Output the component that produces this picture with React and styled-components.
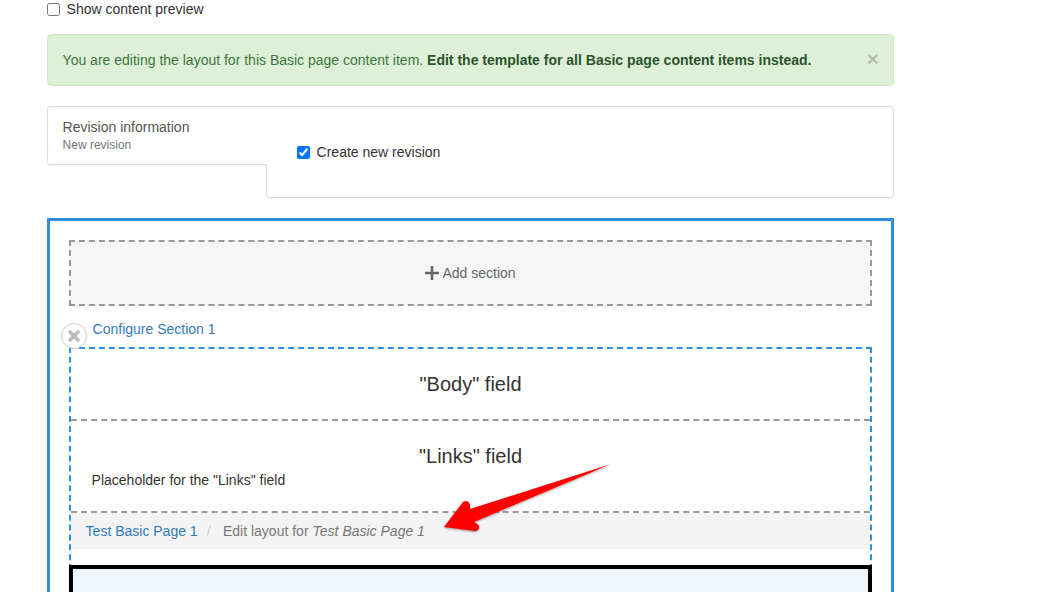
import React from "react";
import styled, { createGlobalStyle } from "styled-components";

const GlobalStyle = createGlobalStyle`
  html, body {
    margin: 0;
    height: 592px;
    overflow: hidden;
    background: #fff;
  }
  body {
    font-family: "Liberation Sans", Arial, sans-serif;
    font-size: 14px;
    line-height: 20px;
    color: #333;
  }
`;

const Page = styled.div`
  width: 847px;
  margin-left: 47px;
  position: relative;
`;

const CheckRow = styled.label`
  display: flex;
  align-items: center;
  gap: 6.6px;
  color: #333;
  input {
    width: 13px;
    height: 13px;
    margin: 0;
  }
`;

const PreviewRow = styled(CheckRow)`
  height: 18px;
`;

const Message = styled.div`
  margin-top: 16px;
  height: 52px;
  box-sizing: border-box;
  padding: 15px 15px 15px 14.6px;
  display: flex;
  justify-content: space-between;
  background: #dff0d8;
  border: 1px solid #d6e9c6;
  border-radius: 4px;
  color: #3c763d;
  b {
    color: #2b542c;
  }
`;

const Close = styled.span`
  font-size: 21px;
  font-weight: 700;
  line-height: 18px;
  color: #000;
  opacity: 0.2;
  margin-right: -1px;
  text-shadow: 0 1px 0 #fff;
`;

const Revision = styled.div`
  margin-top: 20px;
  display: flex;
  align-items: flex-start;
`;

const RevisionTab = styled.div`
  position: relative;
  z-index: 1;
  width: 220px;
  height: 59px;
  box-sizing: border-box;
  margin-right: -1px;
  padding: 11px 14.6px;
  background: #fff;
  border: 1px solid #ddd;
  border-right: 0;
  border-radius: 4px 0 0 4px;
  box-shadow: 0 1px 1px rgba(0, 0, 0, 0.05);
`;

const TabTitle = styled.div`
  color: #555;
  line-height: 18px;
`;

const TabSummary = styled.div`
  color: #777;
  font-size: 12px;
  line-height: 18px;
`;

const RevisionPane = styled.div`
  flex: 1;
  height: 92px;
  box-sizing: border-box;
  padding: 35px 30px;
  background: #fff;
  border: 1px solid #ddd;
  border-radius: 0 4px 4px 4px;
  box-shadow: 0 1px 1px rgba(0, 0, 0, 0.05);
`;

const Builder = styled.div`
  margin-top: 20px;
  padding: 19px 19px 0;
  height: 400px;
  border: 3px solid #2d8fdd;
`;

const AddSection = styled.div`
  height: 66px;
  box-sizing: border-box;
  display: flex;
  align-items: center;
  justify-content: center;
  gap: 3.6px;
  padding-right: 0.6px;
  background: #f6f6f6;
  border: 2px dashed #999;
  color: #666;
`;

const SectionHead = styled.div`
  position: relative;
  height: 41px;
  padding: 13px 0 0 23.6px;
  box-sizing: border-box;
`;

const Link = styled.a`
  color: #337ab7;
  text-decoration: none;
`;

const RemoveButton = styled.span`
  position: absolute;
  left: -8px;
  top: 17px;
  z-index: 2;
  width: 26px;
  height: 26px;
  box-sizing: border-box;
  display: flex;
  align-items: center;
  justify-content: center;
  background: #fff;
  border: 1px solid #ccc;
  border-radius: 50%;
`;

const Section = styled.div`
  border: 2px dashed #2d8fdd;
  border-bottom: 0;
  height: 300px;
`;

const Field = styled.div`
  box-sizing: border-box;
  height: ${(p) => p.$height}px;
  padding: 24px 20.6px 0;
  border-bottom: 2px dashed #999;
`;

const FieldTitle = styled.div`
  text-align: center;
  font-size: 20px;
  line-height: 22px;
  color: #333;
`;

const FieldBody = styled.div`
  margin-top: 3px;
  color: #333;
`;

const Breadcrumb = styled.div`
  height: 35px;
  padding-bottom: 1px;
  display: flex;
  align-items: center;
  padding-left: 14.6px;
  background: #f4f4f4;
  color: #777;
  i {
    margin-left: 4px;
  }
`;

const Divider = styled.span`
  color: #ccc;
  padding: 0 12.4px 0 9px;
`;

const Highlight = styled.div`
  margin: 16px -2px 0;
  height: 100px;
  background: #eff6fd;
  border: 4px solid #000;
`;

const Arrow = styled.svg`
  position: absolute;
  left: 343px;
  top: 455px;
  z-index: 3;
`;

export default function App() {
  return (
    <Page>
      <GlobalStyle />
      <PreviewRow>
        <input type="checkbox" />
        Show content preview
      </PreviewRow>
      <Message>
        <span>
          You are editing the layout for this Basic page content item.{" "}
          <b>Edit the template for all Basic page content items instead.</b>
        </span>
        <Close>×</Close>
      </Message>
      <Revision>
        <RevisionTab>
          <TabTitle>Revision information</TabTitle>
          <TabSummary>New revision</TabSummary>
        </RevisionTab>
        <RevisionPane>
          <CheckRow>
            <input type="checkbox" defaultChecked />
            Create new revision
          </CheckRow>
        </RevisionPane>
      </Revision>
      <Builder>
        <AddSection>
          <svg width="14" height="14" viewBox="0 0 14 14">
            <path d="M7 0v14M0 7h14" stroke="#666" strokeWidth="2.6" />
          </svg>
          Add section
        </AddSection>
        <SectionHead>
          <RemoveButton>
            <svg width="14" height="14" viewBox="0 0 14 14">
              <path d="M2 2l10 10M12 2L2 12" stroke="#bbb" strokeWidth="3.6" />
            </svg>
          </RemoveButton>
          <Link href="#">Configure Section 1</Link>
        </SectionHead>
        <Section>
          <Field $height={72}>
            <FieldTitle>"Body" field</FieldTitle>
          </Field>
          <Field $height={92}>
            <FieldTitle>"Links" field</FieldTitle>
            <FieldBody>Placeholder for the "Links" field</FieldBody>
          </Field>
          <Breadcrumb>
            <Link href="#">Test Basic Page 1</Link>
            <Divider>/</Divider>
            Edit layout for<i>Test Basic Page 1</i>
          </Breadcrumb>
          <Highlight />
        </Section>
      </Builder>
      <Arrow width="240" height="90" viewBox="390 455 240 90">
        <defs>
          <filter id="arrowShadow" x="-10%" y="-10%" width="120%" height="130%">
            <feDropShadow dx="0" dy="1" stdDeviation="0.8" floodColor="#000" floodOpacity="0.4" />
          </filter>
        </defs>
        <path
          d="M611 464 L470 509 L470 505 Q468 499 463 502 L444 527 L474 531 Q480 531 479 526 Q478 524 474 522 Z"
          fill="#f00"
          filter="url(#arrowShadow)"
        />
      </Arrow>
    </Page>
  );
}
